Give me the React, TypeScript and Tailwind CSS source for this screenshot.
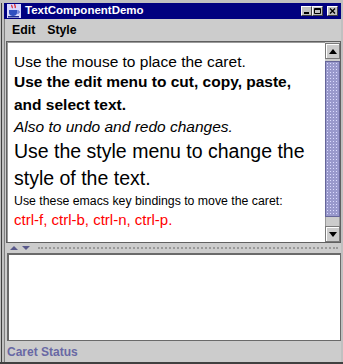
import React from 'react';

const JavaCup = () => (
  <svg width="14" height="14" viewBox="0 0 14 14">
    <rect x="0" y="0" width="14" height="14" fill="#d8d8ff" />
    <path d="M5 1c-1 1 1 2 0 3M8 0c-1 1 1 2 0 4" stroke="#e02020" strokeWidth="1.2" fill="none" />
    <path d="M2 6h8v3c0 2-2 3-4 3s-4-1-4-3z" fill="#3050c0" />
    <path d="M10 7h1.5c1 0 1 2 0 2H10" stroke="#3050c0" strokeWidth="1" fill="none" />
    <rect x="1" y="12" width="11" height="1.5" fill="#203090" />
  </svg>
);

const TitleButton = ({ kind }: { kind: 'min' | 'max' | 'close' }) => (
  <div className="w-[11px] h-[10px] bg-[#c0c0c0] border-t border-l border-white border-r border-b border-r-[#404040] border-b-[#404040] flex items-center justify-center">
    <svg width="7" height="6" viewBox="0 0 7 6">
      {kind === 'min' && <rect x="1" y="4" width="5" height="2" fill="#000" />}
      {kind === 'max' && <path d="M0.5 0.5h6v5h-6z M0.5 1.5h6" stroke="#000" strokeWidth="1" fill="none" />}
      {kind === 'close' && <path d="M1 0.5l5 5M6 0.5l-5 5" stroke="#000" strokeWidth="1.4" />}
    </svg>
  </div>
);

const ArrowButton = ({ up }: { up?: boolean }) => (
  <div className="h-[16px] bg-[#cccccc] border border-[#7a7a7a] shadow-[inset_1px_1px_0_#ffffff] flex items-center justify-center">
    <svg width="8" height="5" viewBox="0 0 8 5">
      {up ? <path d="M0 5L4 0L8 5z" fill="#000" /> : <path d="M0 0L8 0L4 5z" fill="#000" />}
    </svg>
  </div>
);

export default function App() {
  return (
    <div className="w-[343px] h-[364px] bg-[#c0c0c0] pl-px pt-[3px] pr-[2px] border-b-2 border-[#404040] font-['Liberation_Sans',Arial,sans-serif] overflow-hidden">
      <div className="h-full border-l border-[#404040] pl-[2px]">
        <div className="h-full flex flex-col">
          {/* Title bar */}
          <div className="h-[16px] bg-[#000080] flex items-center pl-[3px] pr-[3px]">
            <JavaCup />
            <span className="ml-[4px] text-white font-bold text-[11.5px] leading-none">TextComponentDemo</span>
            <div className="ml-auto flex items-center">
              <TitleButton kind="min" />
              <TitleButton kind="max" />
              <div className="w-[4px]" />
              <TitleButton kind="close" />
            </div>
          </div>

          <div className="flex-1 flex flex-col border-l border-[#808080] bg-[#cccccc]">
            {/* Menu bar */}
            <div className="h-[22px] flex items-center gap-[12px] pl-[7px] text-[12.3px] font-bold text-black">
              <span>Edit</span>
              <span>Style</span>
            </div>

            {/* Text pane */}
            <div className="ml-px h-[202px] border border-[#606060] shadow-[inset_1px_1px_0_#9a9a9a] flex bg-white">
              <div className="flex-1 pl-[7px] pt-[10px] whitespace-nowrap text-black">
                <div className="text-[15.5px] leading-[20px]">Use the mouse to place the caret.</div>
                <div className="text-[15.5px] leading-[20px] font-bold">Use the edit menu to cut, copy, paste,</div>
                <div className="text-[15.5px] leading-[20px] font-bold mt-[3px]">and select text.</div>
                <div className="text-[15.5px] leading-[20px] italic mt-[2px]">Also to undo and redo changes.</div>
                <div className="text-[19.5px] leading-[26px] mt-px">Use the style menu to change the</div>
                <div className="text-[19.5px] leading-[26px] mt-px">style of the text.</div>
                <div className="text-[12.3px] leading-[16px] mt-[2px]">Use these emacs key bindings to move the caret:</div>
                <div className="text-[15px] leading-[20px] mt-px text-[#ff0000]">ctrl-f, ctrl-b, ctrl-n, ctrl-p.</div>
              </div>
              {/* Scrollbar */}
              <div className="w-[15px] flex flex-col pt-px bg-[#cccccc]">
                <ArrowButton up />
                <div className="flex-1 flex flex-col pt-[2px]">
                  <div className="h-[156px] border border-[#666699] bg-[#9999cc] bg-[radial-gradient(circle,#dcdcff_0.7px,transparent_1px)] bg-[length:3px_3px]" />
                  <div className="flex-1 border-x border-[#999999]" />
                </div>
                <ArrowButton />
              </div>
            </div>

            {/* Divider */}
            <div className="h-[10px] flex items-center pl-[5px] pr-[3px] gap-[4px]">
              <svg width="8" height="4" viewBox="0 0 8 4"><path d="M0 4L4 0L8 4z" fill="#5a5a8c" /></svg>
              <svg width="8" height="4" viewBox="0 0 8 4"><path d="M0 0L8 0L4 4z" fill="#5a5a8c" /></svg>
              <div className="flex-1 ml-[4px] h-[2px] border-t-2 border-dotted border-[#9a9a9a]" />
            </div>

            {/* Lower pane */}
            <div className="ml-[2px] h-[88px] border-2 border-[#6a6a6a] border-b border-r bg-white" />

            {/* Status */}
            <div className="flex-1 pl-[2px] pt-[3px] text-[12px] font-bold text-[#6868a4] leading-[16px]">Caret Status</div>
          </div>
        </div>
      </div>
    </div>
  );
}
